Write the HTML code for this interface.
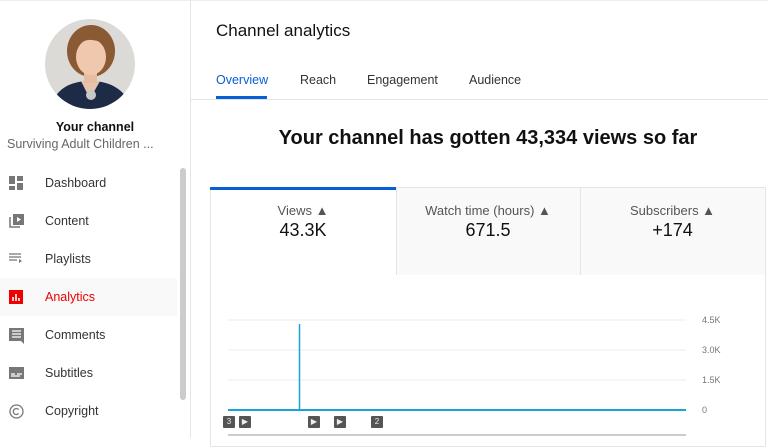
<!DOCTYPE html>
<html><head><style>
body{margin:0;width:768px;height:438px;overflow:hidden;background:#fff;font-family:"Liberation Sans",sans-serif;position:relative}
.a{position:absolute}
.nav{position:absolute;left:45px;font-size:12.5px;color:#333}
.ic{position:absolute;left:9px;width:15px;height:14px}
.tab{position:absolute;top:73px;font-size:12.5px;color:#333}
.m{position:absolute;top:416px;width:12px;height:12px;background:#555;color:#eee;font-size:8px;text-align:center;line-height:12px;border-radius:1px}
</style></head><body>
<div class="a" style="left:0;top:0;width:768px;height:1px;background:#eee"></div>
<div class="a" style="left:190px;top:0;width:1px;height:438px;background:#e5e5e5"></div>
<svg class="a" style="left:45px;top:19px" width="90" height="90">
<defs><clipPath id="c"><circle cx="45" cy="45" r="45"/></clipPath></defs>
<g clip-path="url(#c)">
<rect width="90" height="90" fill="#dcdad6"/>
<ellipse cx="46" cy="32" rx="24" ry="26" fill="#8a5a35"/>
<path d="M5 90C10 70 25 62 45 62S80 70 88 90z" fill="#1d2b47"/>
<path d="M36 62L45 80L55 62z" fill="#e8c4ae"/>
<rect x="39" y="50" width="13" height="14" fill="#e8bca0"/>
<ellipse cx="46" cy="38" rx="15" ry="18" fill="#f0c8ae"/>
<path d="M30 30Q40 14 62 26Q56 18 44 16Q30 18 30 30z" fill="#8a5a35"/>
<circle cx="46" cy="76" r="5" fill="#c8c8c8"/>
</g></svg>
<div class="a" style="left:0;width:190px;top:120px;text-align:center;font-size:12.5px;font-weight:bold;color:#111">Your channel</div>
<div class="a" style="left:7px;top:137px;font-size:12.5px;color:#666">Surviving Adult Children ...</div>
<div class="a" style="left:0;top:278px;width:177px;height:38px;background:#f9f9f9"></div>
<div class="a" style="left:180px;top:168px;width:6px;height:232px;border-radius:3px;background:#ccc"></div>
<div class="ic" style="top:176px"><svg width="15" height="14"><rect x="0" y="0" width="6" height="8" fill="#777"/><rect x="8" y="0" width="6" height="5" fill="#777"/><rect x="0" y="10" width="6" height="4" fill="#777"/><rect x="8" y="7" width="6" height="7" fill="#777"/></svg></div>
<div class="nav" style="top:176px">Dashboard</div>
<div class="ic" style="top:214px"><svg width="15" height="14"><path d="M1 3v10h10" stroke="#777" stroke-width="1.5" fill="none"/><rect x="4" y="0" width="11" height="11" fill="#777"/><path d="M8 3l4 2.5L8 8z" fill="#fff"/></svg></div>
<div class="nav" style="top:214px">Content</div>
<div class="ic" style="top:252px"><svg width="15" height="14"><path d="M0 2h12M0 5h12M0 8h8" stroke="#777" stroke-width="1.3"/><path d="M10 7l3 2-3 2z" fill="#777"/></svg></div>
<div class="nav" style="top:252px">Playlists</div>
<div class="ic" style="top:290px"><svg width="15" height="14"><rect width="14" height="14" fill="#e00"/><path d="M4 11V7M7 11V4M10 11V8" stroke="#fff" stroke-width="1.6"/></svg></div>
<div class="nav" style="top:290px;color:#e00">Analytics</div>
<div class="ic" style="top:328px"><svg width="15" height="16"><path d="M0 0h15v16l-3-3H0z" fill="#777"/><path d="M3 3h9M3 6h9M3 9h9" stroke="#fff" stroke-width="1.2"/></svg></div>
<div class="nav" style="top:328px">Comments</div>
<div class="ic" style="top:366px"><svg width="15" height="14"><rect width="15" height="12" y="1" fill="#777"/><path d="M2 8h4M8 8h5M2 10h9" stroke="#fff" stroke-width="1.2"/></svg></div>
<div class="nav" style="top:366px">Subtitles</div>
<div class="ic" style="top:404px"><svg width="15" height="15"><circle cx="7.5" cy="7.5" r="6.5" stroke="#777" stroke-width="1.3" fill="none"/><path d="M9.6 5.6A3 3 0 1 0 9.6 9.4" stroke="#777" stroke-width="1.3" fill="none"/></svg></div>
<div class="nav" style="top:404px">Copyright</div>

<div class="a" style="left:216px;top:21px;font-size:17px;color:#111">Channel analytics</div>
<div class="tab" style="left:216px;color:#065fd4">Overview</div>
<div class="a" style="left:216px;top:96px;width:51px;height:3px;background:#065fd4"></div>
<div class="tab" style="left:300px">Reach</div>
<div class="tab" style="left:367px">Engagement</div>
<div class="tab" style="left:469px">Audience</div>
<div class="a" style="left:191px;top:99px;width:577px;height:1px;background:#e5e5e5"></div>
<div class="a" style="left:210px;width:556px;top:127px;text-align:center;font-size:20px;font-weight:bold;color:#111">Your channel has gotten 43,334 views so far</div>

<div class="a" style="left:210px;top:187px;width:556px;height:260px;border:1px solid #e5e5e5;box-sizing:border-box"></div>
<div class="a" style="left:396px;top:188px;width:369px;height:87px;background:#f9f9f9"></div>
<div class="a" style="left:580px;top:188px;width:1px;height:87px;background:#e5e5e5"></div>
<div class="a" style="left:396px;top:188px;width:1px;height:87px;background:#e5e5e5"></div>
<div class="a" style="left:210px;top:187px;width:186px;height:3px;background:#065fd4"></div>
<div class="a" style="left:210px;width:186px;top:203px;text-align:center;font-size:13px;color:#555">Views ▲</div>
<div class="a" style="left:210px;width:186px;top:220px;text-align:center;font-size:18px;color:#111">43.3K</div>
<div class="a" style="left:396px;width:184px;top:203px;text-align:center;font-size:13px;color:#555">Watch time (hours) ▲</div>
<div class="a" style="left:396px;width:184px;top:220px;text-align:center;font-size:18px;color:#111">671.5</div>
<div class="a" style="left:580px;width:185px;top:203px;text-align:center;font-size:13px;color:#555">Subscribers ▲</div>
<div class="a" style="left:580px;width:185px;top:220px;text-align:center;font-size:18px;color:#111">+174</div>

<svg class="a" style="left:0;top:0" width="768" height="438">
<path d="M228 320H686M228 350H686M228 380H686" stroke="#eee"/>
<path d="M228 410H686" stroke="#1aa3d4" stroke-width="2"/>
<path d="M299.5 324V410" stroke="#1aa3d4" stroke-width="1.5"/>
<path d="M228 435H686" stroke="#ccc" stroke-width="2"/>
<g font-size="9" fill="#777" font-family="Liberation Sans"><text x="702" y="323">4.5K</text><text x="702" y="353">3.0K</text><text x="702" y="383">1.5K</text><text x="702" y="413">0</text></g>
</svg>
<div class="m" style="left:223px">3</div>
<div class="m" style="left:239px">▶</div>
<div class="m" style="left:308px">▶</div>
<div class="m" style="left:334px">▶</div>
<div class="m" style="left:371px">2</div>
</body></html>
